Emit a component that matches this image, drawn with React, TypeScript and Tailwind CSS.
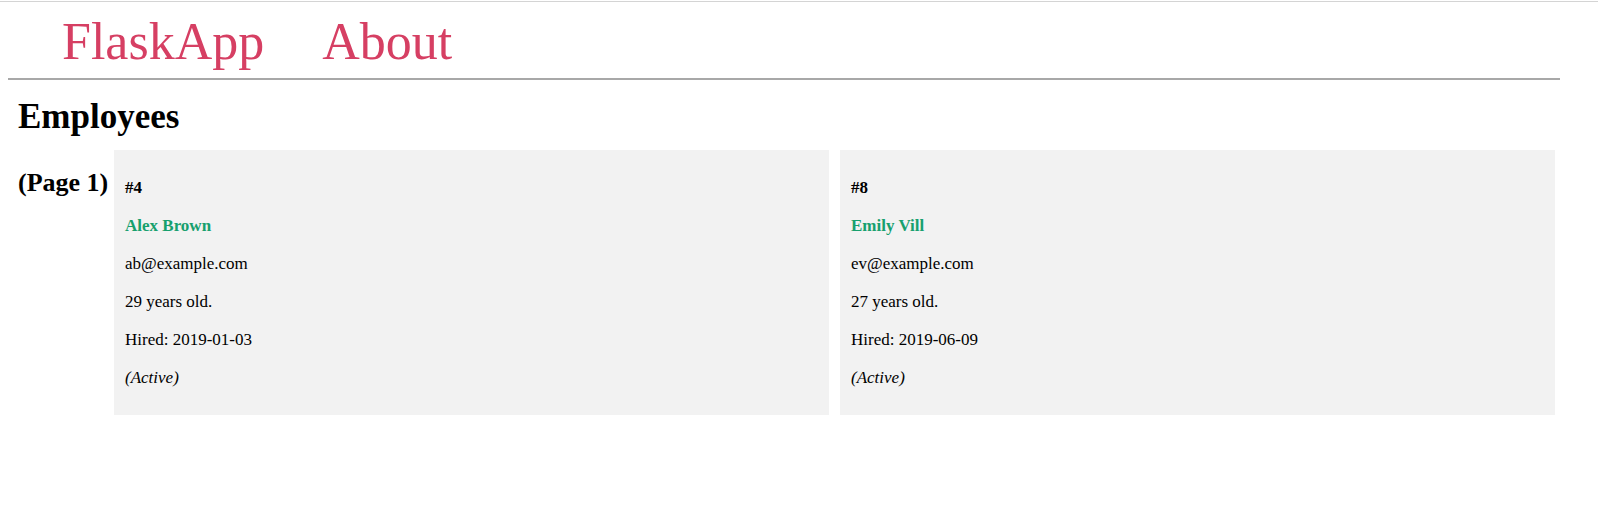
import React from "react";

const employees = [
  { id: 4, name: "Alex Brown", email: "ab@example.com", age: 29, hired: "2019-01-03" },
  { id: 8, name: "Emily Vill", email: "ev@example.com", age: 27, hired: "2019-06-09" },
];

export default function App() {
  return (
    <div className="font-['Liberation_Serif',serif] text-black bg-white min-h-[522px]">
      <div className="mt-px h-px bg-[#d4d4d4]" />
      <nav className="flex gap-[58px] pl-[62px] pt-[11px] h-[76px] text-[52px] leading-[58px] text-[#d63f63]">
        <a href="#">FlaskApp</a>
        <a href="#">About</a>
      </nav>
      <div className="ml-2 mr-[38px] h-[2px] bg-[#a8a8a8]" />
      <main className="pl-[18px] pr-[43px]">
        <h2 className="mt-[17px] text-[35px] leading-[39px] font-bold">Employees</h2>
        <div className="mt-[14px] flex items-start">
          <h3 className="mt-[18px] text-[26px] leading-[30px] font-bold w-[96px] shrink-0">(Page 1)</h3>
          <div className="flex flex-1 gap-[11px]">
            {employees.map((e) => (
              <div key={e.id} className="flex-1 bg-[#f2f2f2] px-[11px] py-[10px] text-[17px] leading-[21px]">
                <p className="my-[17px] font-bold">#{e.id}</p>
                <p className="my-[17px] font-bold text-[#17a06e]">{e.name}</p>
                <p className="my-[17px]">{e.email}</p>
                <p className="my-[17px]">{e.age} years old.</p>
                <p className="my-[17px]">Hired: {e.hired}</p>
                <p className="my-[17px] italic">(Active)</p>
              </div>
            ))}
          </div>
        </div>
      </main>
    </div>
  );
}
